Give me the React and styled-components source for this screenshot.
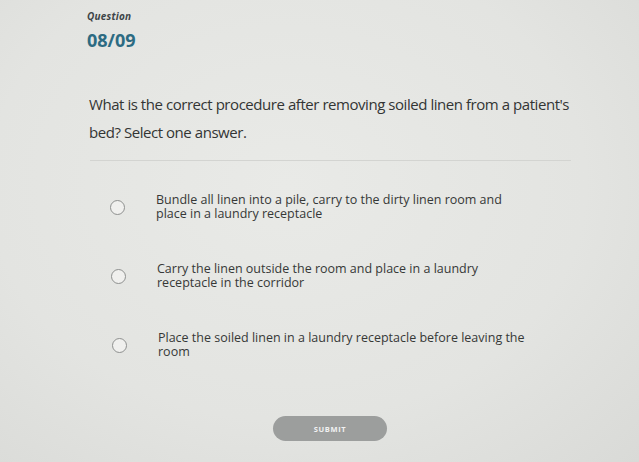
import React from "react"
import styled, { createGlobalStyle } from "styled-components"

const Global = createGlobalStyle`
  html, body {
    margin: 0;
    padding: 0;
    background: #e3e4e1;
  }
  body {
    font-family: "Open Sans", "Noto Sans", sans-serif;
  }
`

const Page = styled.div`
  width: 639px;
  height: 462px;
  box-sizing: border-box;
  padding: 9px 68px 0 87px;
  background: radial-gradient(ellipse at 45% 40%, #e9eae7 0%, #e3e4e1 60%, #d9dad7 100%);
  overflow: hidden;
`

const Label = styled.div`
  font-size: 10px;
  font-weight: 700;
  font-style: italic;
  color: #3d4448;
  letter-spacing: 0.2px;
`

const Counter = styled.div`
  margin-top: 5px;
  font-size: 18px;
  font-weight: 700;
  color: #2c6b82;
`

const QuestionText = styled.p`
  margin: 38px 0 0 2px;
  font-size: 15px;
  letter-spacing: -0.45px;
  line-height: 28px;
  color: #333534;
`

const Divider = styled.hr`
  margin: 14px 0 0 3px;
  border: none;
  border-top: 1px solid #d3d4d1;
`

const Options = styled.div`
  display: flex;
  flex-direction: column;
  gap: 41px;
  margin-top: 32px;
`

const Option = styled.label`
  display: flex;
  align-items: center;
  padding-left: ${(p) => p.$indent}px;
`

const Radio = styled.span`
  width: 13px;
  height: 13px;
  border-radius: 50%;
  border: 1.2px solid #8e908f;
  background: #f0f0ee;
  flex-shrink: 0;
`

const OptionText = styled.span`
  margin-left: ${(p) => p.$gap}px;
  font-size: 12.5px;
  line-height: 14px;
  color: #363837;
  max-width: 370px;
`

const Footer = styled.div`
  display: flex;
  justify-content: center;
  margin-top: 57px;
  padding-left: 2px;
`

const SubmitButton = styled.button`
  width: 114px;
  height: 25px;
  border: none;
  border-radius: 13px;
  background: #9c9e9d;
  color: #f2f2f2;
  font-family: "Open Sans", sans-serif;
  font-size: 7.5px;
  font-weight: 700;
  letter-spacing: 0.6px;
`

const answers = [
  { text: "Bundle all linen into a pile, carry to the dirty linen room and place in a laundry receptacle", indent: 23, gap: 31 },
  { text: "Carry the linen outside the room and place in a laundry receptacle in the corridor", indent: 24, gap: 31 },
  { text: "Place the soiled linen in a laundry receptacle before leaving the room", indent: 25, gap: 31 },
]

const App = () => (
  <>
    <Global />
    <Page>
      <Label>Question</Label>
      <Counter>08/09</Counter>
      <QuestionText>
        What is the correct procedure after removing soiled linen from a patient's bed? Select one answer.
      </QuestionText>
      <Divider />
      <Options>
        {answers.map((a) => (
          <Option key={a.text} $indent={a.indent}>
            <Radio />
            <OptionText $gap={a.gap}>{a.text}</OptionText>
          </Option>
        ))}
      </Options>
      <Footer>
        <SubmitButton>SUBMIT</SubmitButton>
      </Footer>
    </Page>
  </>
)

export default App
